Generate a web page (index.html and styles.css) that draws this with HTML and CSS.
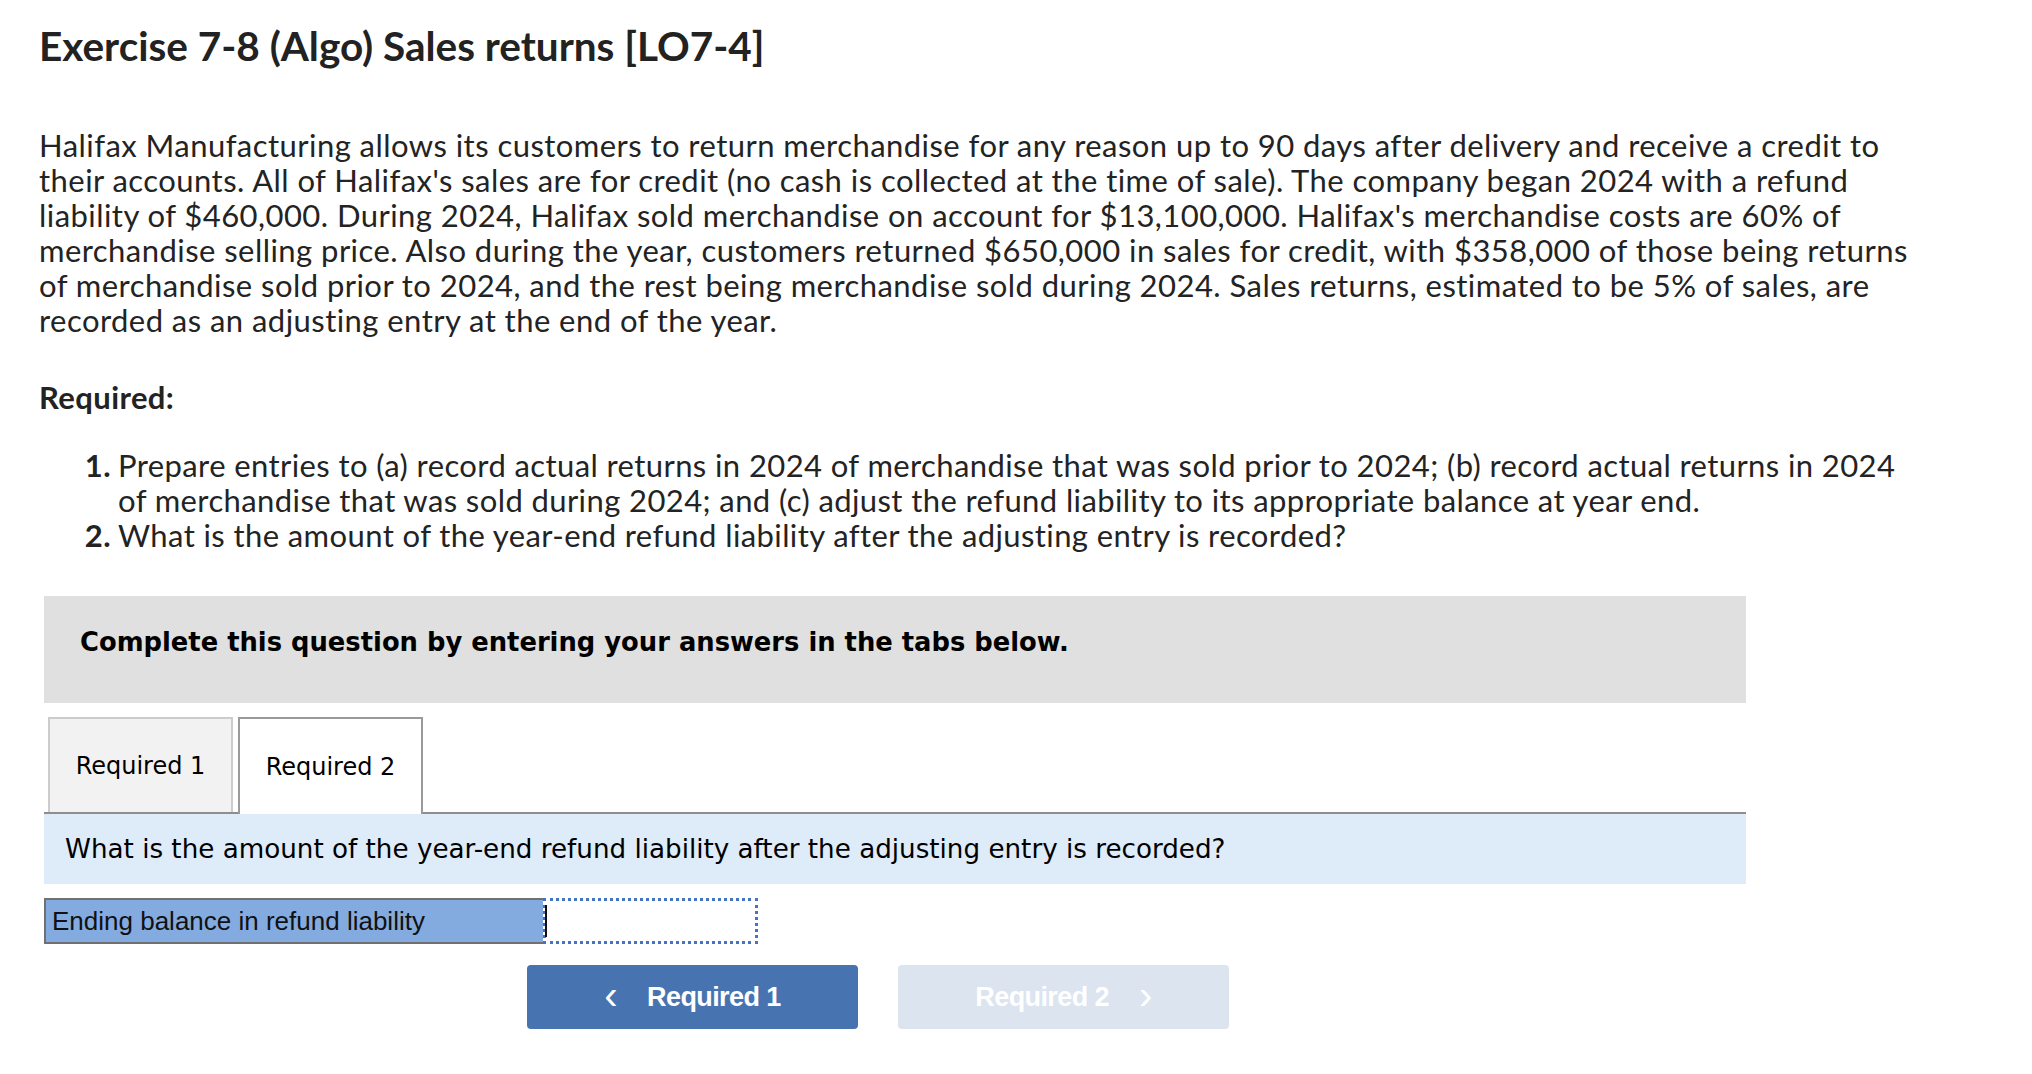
FILE: index.html
```html
<!DOCTYPE html>
<html lang="en">
<head>
<meta charset="utf-8">
<title>Exercise 7-8 (Algo) Sales returns</title>
<link rel="stylesheet" href="styles.css">
</head>
<body>
<div class="page">
  <h1 class="title">Exercise 7-8 (Algo) Sales returns [LO7-4]</h1>
  <p class="intro">Halifax Manufacturing allows its customers to return merchandise for any reason up to 90 days after delivery and receive a credit to<br>their accounts. All of Halifax's sales are for credit (no cash is collected at the time of sale). The company began 2024 with a refund<br>liability of $460,000. During 2024, Halifax sold merchandise on account for $13,100,000. Halifax's merchandise costs are 60% of<br>merchandise selling price. Also during the year, customers returned $650,000 in sales for credit, with $358,000 of those being returns<br>of merchandise sold prior to 2024, and the rest being merchandise sold during 2024. Sales returns, estimated to be 5% of sales, are<br>recorded as an adjusting entry at the end of the year.</p>
  <h2 class="req-head">Required:</h2>
  <div class="req-list">
    <div class="req-item"><span class="req-num">1.</span><span class="req-text">Prepare entries to (a) record actual returns in 2024 of merchandise that was sold prior to 2024; (b) record actual returns in 2024<br>of merchandise that was sold during 2024; and (c) adjust the refund liability to its appropriate balance at year end.</span></div>
    <div class="req-item"><span class="req-num">2.</span><span class="req-text">What is the amount of the year-end refund liability after the adjusting entry is recorded?</span></div>
  </div>

  <div class="question">
    <div class="instructions">Complete this question by entering your answers in the tabs below.</div>
    <div class="tabs">
      <div class="tab">Required 1</div>
      <div class="tab tab-active">Required 2</div>
    </div>
    <div class="prompt">What is the amount of the year-end refund liability after the adjusting entry is recorded?</div>
    <div class="answer-row">
      <div class="answer-label">Ending balance in refund liability</div>
      <div class="answer-input"><span class="caret"></span></div>
    </div>
    <div class="nav">
      <div class="nav-btn nav-prev"><span class="chev">&lsaquo;</span><span>Required 1</span></div>
      <div class="nav-btn nav-next"><span>Required 2</span><span class="chev">&rsaquo;</span></div>
    </div>
  </div>
</div>
</body>
</html>
```

FILE: styles.css
```css
html, body {
  margin: 0;
  padding: 0;
  background: #ffffff;
}

.page {
  padding-left: 39px;
  font-family: "Lato", "Liberation Sans", sans-serif;
  color: #232323;
}

.title {
  margin: 23px 0 0;
  font-size: 40.5px;
  line-height: 46px;
  font-weight: 700;
  color: #222222;
}

.intro {
  margin: 59px 0 0;
  font-size: 31px;
  line-height: 35px;
  letter-spacing: 0.45px;
  white-space: nowrap;
}

.req-head {
  margin: 42px 0 0;
  font-size: 31px;
  line-height: 35px;
  letter-spacing: 0.4px;
  font-weight: 700;
}

.req-list {
  margin-top: 33px;
  font-size: 31px;
  line-height: 35px;
  letter-spacing: 0.4px;
}

.req-item {
  display: flex;
  white-space: nowrap;
}

.req-num {
  width: 79px;
  flex: none;
  padding-right: 7px;
  text-align: right;
  font-weight: 700;
  box-sizing: border-box;
}

.question {
  margin: 43px 0 0 5px;
  width: 1702px;
  font-family: "DejaVu Sans", Verdana, sans-serif;
  color: #000000;
}

.instructions {
  height: 107px;
  box-sizing: border-box;
  display: flex;
  align-items: center;
  padding-left: 36px;
  padding-bottom: 15px;
  background: #e0e0e0;
  font-size: 25.8px;
  font-weight: 700;
}

.tabs {
  margin-top: 14px;
  display: flex;
  gap: 5px;
  padding-left: 4px;
  border-bottom: 2px solid #8e8e8e;
  height: 95px;
}

.tab {
  width: 185px;
  box-sizing: border-box;
  display: flex;
  align-items: center;
  justify-content: center;
  background: #f2f2f2;
  border: 2px solid #cccccc;
  border-bottom: none;
  font-size: 24px;
}

.tab-active {
  background: #ffffff;
  border-color: #9a9a9a;
  height: 97px;
  position: relative;
  z-index: 1;
}

.prompt {
  height: 70px;
  display: flex;
  align-items: center;
  padding-left: 21px;
  background: #deebf8;
  font-size: 26.2px;
}

.answer-row {
  margin-top: 14px;
  display: flex;
  height: 46px;
}

.answer-label {
  width: 499px;
  box-sizing: border-box;
  display: flex;
  align-items: center;
  padding-left: 6px;
  background: #84abe0;
  border: 2px solid #707070;
  border-right: none;
  font-family: "Liberation Sans", Arial, sans-serif;
  font-size: 26px;
  color: #111111;
}

.answer-input {
  width: 215px;
  box-sizing: border-box;
  border: 3px dotted #4474c0;
  position: relative;
  background: #ffffff;
}

.caret {
  position: absolute;
  left: -1px;
  top: 4px;
  width: 2px;
  height: 32px;
  background: #111111;
}

.nav {
  margin-top: 21px;
  display: flex;
  gap: 40px;
  padding-left: 483px;
}

.nav-btn {
  width: 331px;
  height: 64px;
  border-radius: 4px;
  display: flex;
  align-items: center;
  justify-content: center;
  gap: 30px;
  font-family: "Liberation Sans", Arial, sans-serif;
  font-size: 27px;
  font-weight: 700;
  letter-spacing: -0.6px;
  color: #ffffff;
}

.nav-prev {
  background: #4873b1;
}

.nav-next {
  background: #dbe4ef;
}

.chev {
  font-weight: 400;
  font-size: 40px;
  line-height: 1;
  margin-top: -4px;
}
```
